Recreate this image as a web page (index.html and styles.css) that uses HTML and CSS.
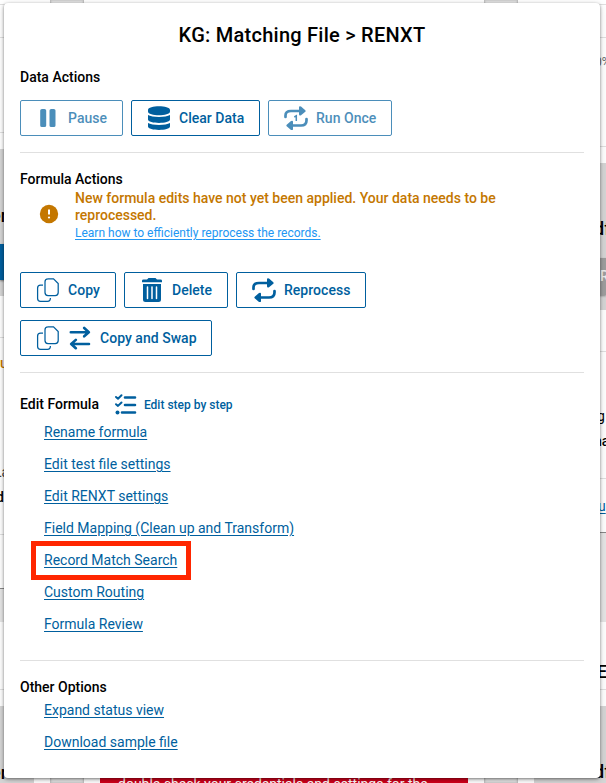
FILE: index.html
```html
<!DOCTYPE html>
<html lang="en">
<head>
<meta charset="utf-8">
<title>KG: Matching File &gt; RENXT</title>
<link rel="stylesheet" href="styles.css">
</head>
<body>
<svg class="defs" width="0" height="0">
  <symbol id="copy" viewBox="0 0 24 24"><g fill="none" stroke="currentColor" stroke-width="1.25"><path d="M11.5 .8H17.5L22.200 5.500V14.500Q22.200 17.500 19.200 17.500H12Q9 17.500 9 14.500V3.800Q9 .8 12 .8Z"/><path d="M7 7H4.500Q1.600 7 1.600 10V20.500Q1.600 23.300 4.500 23.300H11.500Q14.400 23.300 14.400 20"/></g></symbol>
  <symbol id="repeat" viewBox="0 0 24 24"><path d="M1.5 11V9.5Q1.5 5 7 5H17M22.5 13v1.5Q22.5 19.500 17 19.500H7" fill="none" stroke="currentColor" stroke-width="2.700" stroke-linecap="round"/><path d="M15 1.4Q15-.2 17 .5L21.3 4.2Q22 5 21.3 5.8L17 9.3Q15 10 15 8.3ZM9 15.8Q9 14.2 7 15L2.7 18.7Q2 19.5 2.7 20.3L7 24Q9 24.5 9 23Z" fill="currentColor"/></symbol>
</svg>
<div class="board">
  <div class="col left">
    <div class="row r4"></div><div class="row r33"></div><div class="row r95"></div><div class="row r17 plain"></div>
    <div class="band b147"><span class="peek name-l">er</span><span class="btn-l"></span></div>
    <div class="row r42"></div>
    <div class="row r197"><span class="peek warn-l">u</span><span class="peek text-l">La</span><span class="peek bold-l">d</span></div>
    <div class="row r53 plain end"></div>
    <div class="space s34"></div>
    <div class="row r68"></div><div class="row r16 plain"></div>
    <div class="band rest"><span class="peek name-l">er</span></div>
  </div>
  <div class="gutter"></div>
  <div class="col middle"><div class="alert">double check your credentials and settings for the</div></div>
  <div class="gutter"></div>
  <div class="col right">
    <div class="row r4"></div><div class="row r33"></div><div class="row r109"><span class="peek percent">0%</span></div><div class="row r16 plain"></div>
    <div class="band b147"><span class="peek name-r">df</span><span class="btn-r">R</span></div>
    <div class="row r42"></div>
    <div class="row r127"><span class="peek text-r">g</span><span class="peek bold-r">ha</span></div>
    <div class="row r53 plain end"><span class="peek link-r">u</span></div>
    <div class="space s90"></div>
    <div class="row r68"><span class="peek head-r">E</span></div><div class="row r16 plain"></div>
    <div class="band rest"><span class="peek name-r">df</span></div>
  </div>
</div>

<main class="dialog">
  <h1>KG: Matching File &gt; RENXT</h1>
  <section class="data">
    <h2>Data Actions</h2>
    <div class="buttons">
      <button class="btn off w103"><svg viewBox="0 0 24 24"><path d="M4.2 4.5Q4.2 3 6 3H8.500Q10.200 3 10.200 4.500V19.500Q10.200 21 8.500 21H6Q4.200 21 4.200 19.500ZM13.500 4.500Q13.500 3 15.200 3H17.800Q19.500 3 19.500 4.500V19.500Q19.500 21 17.800 21H15.200Q13.500 21 13.500 19.500Z" fill="currentColor"/></svg>Pause</button>
      <button class="btn w129"><svg viewBox="0 0 24 24"><path d="M1 4C1-1 23-1 23 4V5.500C23 10.500 1 10.500 1 5.500ZM1 9C5 11.500 19 11.500 23 9V13.500C23 18 1 18 1 13.500ZM1 17C5 19.500 19 19.500 23 17V20.500C23 25 1 25 1 20.500Z" fill="currentColor"/></svg>Clear Data</button>
      <button class="btn off w124"><svg viewBox="0 0 24 24"><use href="#repeat"/><path d="M10.300 11L12.300 9.800V15" fill="none" stroke="currentColor" stroke-width="1.500"/></svg>Run Once</button>
    </div>
  </section>
  <hr>
  <section class="formula">
    <h2>Formula Actions</h2>
    <div class="notice">
      <svg viewBox="0 0 20 20"><circle cx="10" cy="10" r="9.200" fill="#c47700"/><path d="M10 5.500V10.500" stroke="#fff" stroke-width="2"/><circle cx="10" cy="13.500" r="1.100" fill="#fff"/></svg>
      <div><p>New formula edits have not yet been applied. Your data needs to be reprocessed.</p><a href="#">Learn how to efficiently reprocess the records.</a></div>
    </div>
    <div class="buttons wrap">
      <button class="btn w96"><svg><use href="#copy"/></svg>Copy</button>
      <button class="btn w104"><svg viewBox="0 0 24 24"><path d="M2 2.800Q2 1.500 3.500 1.500H7L8.500 0H15.500L17 1.500H20.500Q22 1.500 22 2.800V4.200H2ZM3 6H21V21.500Q21 24 18.500 24H5.500Q3 24 3 21.500Z" fill="currentColor"/><path d="M7.500 9V20.500M12 9V20.500M16.500 9V20.500" stroke="#fff" stroke-width="1.500" stroke-linecap="round"/></svg>Delete</button>
      <button class="btn w130"><svg><use href="#repeat"/></svg>Reprocess</button>
      <button class="btn w192"><svg><use href="#copy"/></svg><svg viewBox="0 0 24 24"><path d="M2.800 6.200H20.500M16.200 2L20.800 6.200L16.200 10.300M21 18H3.500M7.800 13.900L3.200 18L7.800 22.200" fill="none" stroke="currentColor" stroke-width="2.600" stroke-linecap="round" stroke-linejoin="round"/></svg>Copy and Swap</button>
    </div>
  </section>
  <hr>
  <section class="edit">
    <div class="edit-head"><h2>Edit Formula</h2><a class="step" href="#"><svg viewBox="0 0 24 24"><path d="M11 4.500H21M11 12H21M8 19.500H21" stroke="currentColor" stroke-width="2.600" stroke-linecap="round"/><path d="M2 4L4 5.700L7.500 2.300M2 11.200L4 12.900L7.500 9.500" fill="none" stroke="currentColor" stroke-width="2" stroke-linecap="round" stroke-linejoin="round"/><circle cx="3.500" cy="19.500" r="2" fill="currentColor"/></svg>Edit step by step</a></div>
    <nav class="links">
      <a href="#">Rename formula</a>
      <a href="#">Edit test file settings</a>
      <a href="#">Edit RENXT settings</a>
      <a href="#">Field Mapping (Clean up and Transform)</a>
      <a class="marked" href="#">Record Match Search</a>
      <a href="#">Custom Routing</a>
      <a href="#">Formula Review</a>
    </nav>
  </section>
  <hr>
  <section class="other">
    <h2>Other Options</h2>
    <nav class="links"><a href="#">Expand status view</a><a href="#">Download sample file</a></nav>
  </section>
</main>
</body>
</html>
```
FILE: styles.css
```css
*, *::after { box-sizing: border-box; }
body { margin: 0; width: 606px; height: 783px; overflow: hidden; position: relative; font-family: Roboto, "Liberation Sans", sans-serif; font-size: 14px; color: #000; }
.defs { position: absolute; }
.board { display: grid; grid-template-columns: 50px 34px 400px 34px 88px; height: 783px; overflow: hidden; background: #fff; }
.gutter, .space { background: #e6e6e6; }
.gutter { box-shadow: inset 1px 0 2px #bbb, inset -1px 0 2px #bbb; }
.col { display: flex; flex-direction: column; min-width: 0; height: 783px; overflow: hidden; }
.row { flex: none; border-bottom: 1px solid #e0e0e0; }
.plain { border-bottom: 0; }
.end { border-bottom: 1px solid #888; }
.r4 { height: 5px; } .r33 { height: 33px; } .r95 { height: 95px; } .r17 { height: 16px; }
.r16 { height: 16px; } .r42 { height: 42px; } .r197 { height: 197px; } .r53 { height: 54px; }
.r68 { height: 68px; } .r109 { height: 109px; } .r127 { height: 127px; }
.s34 { height: 33px; } .s90 { height: 89px; }
.space { flex: none; }
.band { flex: none; background: #d6d6d6; }
.b147 { height: 147px; }
.left .band { width: 34px; }
.right .band { margin-left: 16px; }
.rest { flex: 1; }
.peek { display: block; line-height: 20px; white-space: nowrap; }
.name-l { padding-top: 57px; margin-left: -9px; font-size: 18px; font-weight: 500; }
.btn-l { display: block; margin-top: 18px; width: 30px; height: 36px; background: #005f9e; box-shadow: 0 1px 2px #777; }
.warn-l { padding-top: 15px; color: #c47700; font-weight: 500; }
.text-l { padding-top: 89px; margin-left: -6px; color: #444; }
.bold-l { padding-top: 5px; margin-left: -4px; font-weight: 500; }
.percent { padding: 14px 0 0 77px; font-size: 12px; color: #666; }
.name-r { padding: 56px 0 0 60px; font-size: 18px; font-weight: 500; }
.btn-r { display: block; margin: 19px 0 0 16px; padding-left: 50px; height: 37px; line-height: 37px; color: #eee; background: #9e9e9e; font-weight: 500; box-shadow: 0 1px 2px #888; }
.text-r { padding: 54px 0 0 79px; }
.bold-r { padding: 5px 0 0 76px; font-weight: 500; }
.link-r { padding: 17px 0 0 80px; color: #005f9e; text-decoration: underline; text-underline-offset: 2px; }
.head-r { padding: 40px 0 0 79px; font-size: 18px; font-weight: 500; }
.middle { justify-content: flex-end; }
.alert { margin: 0 16px; height: 9px; padding-left: 18px; background: #d0021b; color: #fff; line-height: 20px; white-space: nowrap; overflow: hidden; }

.dialog { position: absolute; left: 4px; top: 3px; width: 596px; height: 775px; padding: 16px; background: #fff; border-radius: 4px; box-shadow: 0 1px 3px rgba(0,0,0,.45), 0 2px 8px rgba(0,0,0,.16); }
h1, h2, p { margin: 0; }
h1 { height: 48px; line-height: 32px; text-align: center; font-size: 20px; font-weight: 500; letter-spacing: .25px; }
h2 { height: 20px; line-height: 20px; font-size: 14px; font-weight: 500; }
hr { margin: 0; border: 0; height: 1px; background: #e0e0e0; }
.data { height: 85px; }
.buttons { display: flex; gap: 8px; margin-top: 13px; }
.wrap { flex-wrap: wrap; row-gap: 12px; margin-top: 29px; max-width: 400px; }
.btn { display: flex; align-items: center; gap: 8px; flex: none; height: 36px; padding: 0 15px; border: 1px solid #005f9e; border-radius: 2px; background: #fff; color: #005f9e; font: 500 14px/36px Roboto, "Liberation Sans", sans-serif; letter-spacing: .03px; white-space: nowrap; }
.btn svg { width: 24px; height: 24px; flex: none; }
.off { opacity: .7; }
.w103 { width: 103px; } .w129 { width: 129px; } .w124 { width: 124px; } .w96 { width: 96px; } .w104 { width: 104px; } .w130 { width: 130px; } .w192 { width: 192px; }
.formula { height: 219px; padding-top: 16px; }
.notice { display: grid; grid-template-columns: 20px 1fr; column-gap: 16px; padding: 1px 60px 0 19px; color: #c47700; }
.notice > svg { width: 20px; height: 20px; align-self: center; margin-top: -5px; }
.notice p { line-height: 17px; font-weight: 500; }
.notice a { display: block; line-height: 19px; font-size: 12px; color: #2196f3; text-underline-offset: 2px; }
.edit { height: 287px; padding-top: 19px; }
.edit-head { display: flex; height: 24px; align-items: center; gap: 15px; }
.step { display: flex; align-items: center; gap: 6px; padding-top: 1px; color: #005f9e; font-size: 12px; font-weight: 500; text-decoration: none; }
.step svg { width: 24px; height: 24px; fill: none; }
.links { display: flex; flex-direction: column; align-items: flex-start; padding-left: 24px; }
.links a { height: 32px; line-height: 32px; color: #005f9e; text-underline-offset: 2px; position: relative; white-space: nowrap; }
.links .marked::after { content: ""; position: absolute; left: -13px; right: -14px; top: -3px; height: 39px; border: 5px solid #ff2600; }
.other { padding-top: 16px; }
.other .links { margin-top: -3px; }
```
